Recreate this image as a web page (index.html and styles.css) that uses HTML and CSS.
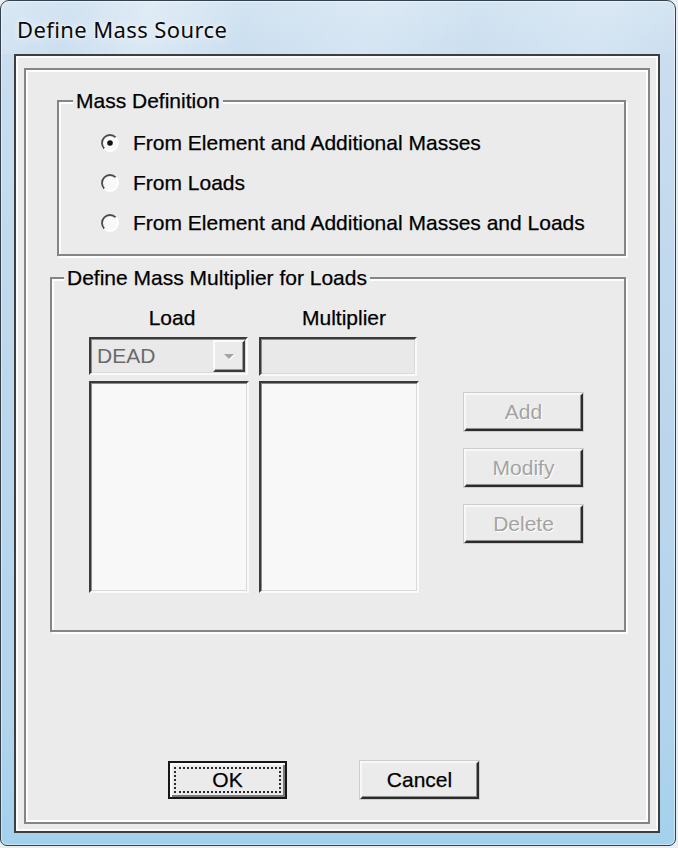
FILE: index.html
```html
<!DOCTYPE html>
<html lang="en">
<head>
<meta charset="utf-8">
<title>Define Mass Source</title>
<link rel="stylesheet" href="styles.css">
</head>
<body>
<div class="window">
  <div class="titlebar"><span class="title">Define Mass Source</span></div>
  <div class="client">
    <div class="panel">
      <fieldset class="group group-mass">
        <legend>Mass Definition</legend>
        <div class="radios">
          <div class="radio-row">
            <svg class="radio" viewBox="0 0 20 20" width="20" height="20" aria-hidden="true">
              <circle cx="10" cy="10" r="8" fill="#f9f9f9"/>
              <path d="M4.34 15.66A8 8 0 0 1 15.66 4.34" fill="none" stroke="#4a4a4a" stroke-width="1.8"/>
              <path d="M15.66 4.34A8 8 0 0 1 4.34 15.66" fill="none" stroke="#ffffff" stroke-width="1.8"/>
              <circle cx="10" cy="10" r="2.8" fill="#111"/>
            </svg>
            <span>From Element and Additional Masses</span>
          </div>
          <div class="radio-row">
            <svg class="radio" viewBox="0 0 20 20" width="20" height="20" aria-hidden="true">
              <circle cx="10" cy="10" r="8" fill="#f9f9f9"/>
              <path d="M4.34 15.66A8 8 0 0 1 15.66 4.34" fill="none" stroke="#4a4a4a" stroke-width="1.8"/>
              <path d="M15.66 4.34A8 8 0 0 1 4.34 15.66" fill="none" stroke="#ffffff" stroke-width="1.8"/>
            </svg>
            <span>From Loads</span>
          </div>
          <div class="radio-row">
            <svg class="radio" viewBox="0 0 20 20" width="20" height="20" aria-hidden="true">
              <circle cx="10" cy="10" r="8" fill="#f9f9f9"/>
              <path d="M4.34 15.66A8 8 0 0 1 15.66 4.34" fill="none" stroke="#4a4a4a" stroke-width="1.8"/>
              <path d="M15.66 4.34A8 8 0 0 1 4.34 15.66" fill="none" stroke="#ffffff" stroke-width="1.8"/>
            </svg>
            <span>From Element and Additional Masses and Loads</span>
          </div>
        </div>
      </fieldset>

      <fieldset class="group group-mult">
        <legend>Define Mass Multiplier for Loads</legend>
        <div class="mult">
          <div class="col">
            <div class="colhead">Load</div>
            <div class="combo">
              <span class="combo-text">DEAD</span>
              <span class="drop"><span class="arrow"></span></span>
            </div>
            <div class="list"></div>
          </div>
          <div class="col">
            <div class="colhead colhead-mult">Multiplier</div>
            <div class="textbox"></div>
            <div class="list"></div>
          </div>
          <div class="side">
            <button class="btn btn-disabled" type="button">Add</button>
            <button class="btn btn-disabled" type="button">Modify</button>
            <button class="btn btn-disabled" type="button">Delete</button>
          </div>
        </div>
      </fieldset>

      <div class="actions">
        <button class="btn btn-default" type="button"><span class="focus">OK</span></button>
        <button class="btn" type="button">Cancel</button>
      </div>
    </div>
  </div>
</div>
</body>
</html>
```

FILE: styles.css
```css
* { box-sizing: border-box; }

html, body {
  margin: 0;
  padding: 0;
}

body {
  width: 678px;
  height: 848px;
  background: #e9eef1;
  font-family: "Liberation Sans", Arial, sans-serif;
  font-size: 21px;
  color: #000;
  overflow: hidden;
}

.window {
  width: 676px;
  height: 846px;
  border: 1px solid #34404a;
  border-radius: 9px 9px 7px 7px;
  background: linear-gradient(180deg, #d3e4f2 0%, #c9ddef 8%, #bdd7ec 45%, #b2d4ec 85%, #a3d1ec 100%);
  box-shadow: inset 0 0 0 1px rgba(255, 255, 255, 0.45);
  display: flex;
  flex-direction: column;
}

.titlebar {
  height: 53px;
  flex: none;
  padding: 3px 0 0 16px;
  display: flex;
  align-items: center;
  border-radius: 8px 8px 0 0;
  background: linear-gradient(100deg, rgba(255,255,255,0.15) 0%, rgba(255,255,255,0) 10%, rgba(255,255,255,0.3) 22%, rgba(255,255,255,0) 36%, rgba(255,255,255,0.18) 55%, rgba(255,255,255,0) 70%, rgba(255,255,255,0.16) 88%, rgba(255,255,255,0) 100%);
}

.title {
  font-family: "Noto Sans", "Open Sans", sans-serif;
  font-size: 22px;
  letter-spacing: 0.4px;
  color: #0a0a0a;
  text-shadow: 0 0 8px rgba(255, 255, 255, 0.9), 0 0 3px rgba(255, 255, 255, 0.8);
}

.client {
  flex: 1;
  margin: 0 15px 12px 13px;
  background: #ebebeb;
  border: 2px solid #3e3e3e;
  box-shadow: inset 0 0 0 2px #fbfbfb;
  padding: 12px 8px 7px 8px;
  display: flex;
  -webkit-text-stroke: 0.25px #000;
}

.panel {
  flex: 1;
  border: 2px solid #858585;
  box-shadow: inset 0 0 0 2px #fdfdfd;
  display: flex;
  flex-direction: column;
}

.group {
  border: 2px solid #858585;
  box-shadow: inset 2px 2px 0 #fdfdfd, 2px 2px 0 #fdfdfd;
  margin: 0;
  padding: 0;
  min-width: 0;
}

.group legend {
  margin-left: 14px;
  padding: 0 3px;
  line-height: 24px;
  background: #ebebeb;
}

.group-mass {
  margin: 19px 22px 0 31px;
  padding: 10px 0 11px 0;
}

.radios {
  padding-left: 41px;
}

.radio-row {
  height: 40px;
  display: flex;
  align-items: center;
  gap: 13px;
  line-height: 24px;
}

.radio {
  flex: none;
  display: block;
}

.group-mult {
  margin: 10px 22px 0 24px;
  padding: 16px 0 37px 0;
}

.group-mult legend {
  margin-left: 12px;
}

.mult {
  display: flex;
  padding-left: 37px;
}

.col {
  width: 160px;
  display: flex;
  flex-direction: column;
}

.col + .col {
  margin-left: 10px;
}

.colhead {
  height: 24px;
  line-height: 24px;
  text-align: center;
  margin-bottom: 7px;
  padding-left: 6px;
}

.colhead-mult {
  padding-left: 10px;
}

.combo,
.textbox,
.list {
  border: 2px solid;
  border-color: #3a3a3a #fafafa #fafafa #3a3a3a;
  box-shadow: inset 1px 1px 0 #8c8c8c, inset -1px -1px 0 #dadada;
}

.combo {
  height: 38px;
  width: 159px;
  background: #e9e9e9;
  display: flex;
  align-items: center;
  margin-bottom: 6px;
}

.combo-text {
  padding-left: 6px;
  color: #6a6a6a;
  line-height: 24px;
  -webkit-text-stroke: 0;
}

.drop {
  width: 32px;
  height: 32px;
  margin-left: auto;
  margin-right: 1px;
  border: 2px solid;
  border-color: #fbfbfb #3c3c3c #3c3c3c #fbfbfb;
  box-shadow: inset -1px -1px 0 #9a9a9a;
  background: #ebebeb;
  display: flex;
  align-items: center;
  justify-content: center;
}

.arrow {
  width: 0;
  height: 0;
  border-left: 5px solid transparent;
  border-right: 5px solid transparent;
  border-top: 5px solid #a4a4a4;
  filter: drop-shadow(1px 1px 0 #fff);
}

.textbox {
  height: 39px;
  width: 158px;
  background: #e9e9e9;
  margin-bottom: 5px;
}

.list {
  height: 212px;
  background: #f8f8f8;
}

.side {
  margin-left: 45px;
  padding-top: 87px;
  display: flex;
  flex-direction: column;
  gap: 18px;
}

.btn {
  appearance: none;
  width: 119px;
  height: 38px;
  margin: 0;
  padding: 0;
  font: inherit;
  color: #000;
  background: #ebebeb;
  border: 2px solid;
  border-color: #f8f8f8 #2c2c2c #2c2c2c #f8f8f8;
  box-shadow: inset -1px -1px 0 #8f8f8f, 0 0 0 1px rgba(150, 150, 150, 0.35);
  display: flex;
  align-items: center;
  justify-content: center;
  line-height: 24px;
}

.btn-disabled {
  color: #a3a3a3;
  -webkit-text-stroke: 0;
  text-shadow: 1px 1px 0 #ffffff;
}

.actions {
  margin-top: auto;
  padding: 0 0 23px 142px;
  display: flex;
  gap: 73px;
}

.btn-default {
  border: 2px solid #161616;
  box-shadow: inset 2px 2px 0 #fbfbfb, inset -2px -2px 0 #7a7a7a;
  padding: 4px;
  align-items: stretch;
  justify-content: stretch;
}

.focus {
  flex: 1;
  border: 2px dotted #2a2a2a;
  display: flex;
  align-items: center;
  justify-content: center;
  line-height: 22px;
}
```
